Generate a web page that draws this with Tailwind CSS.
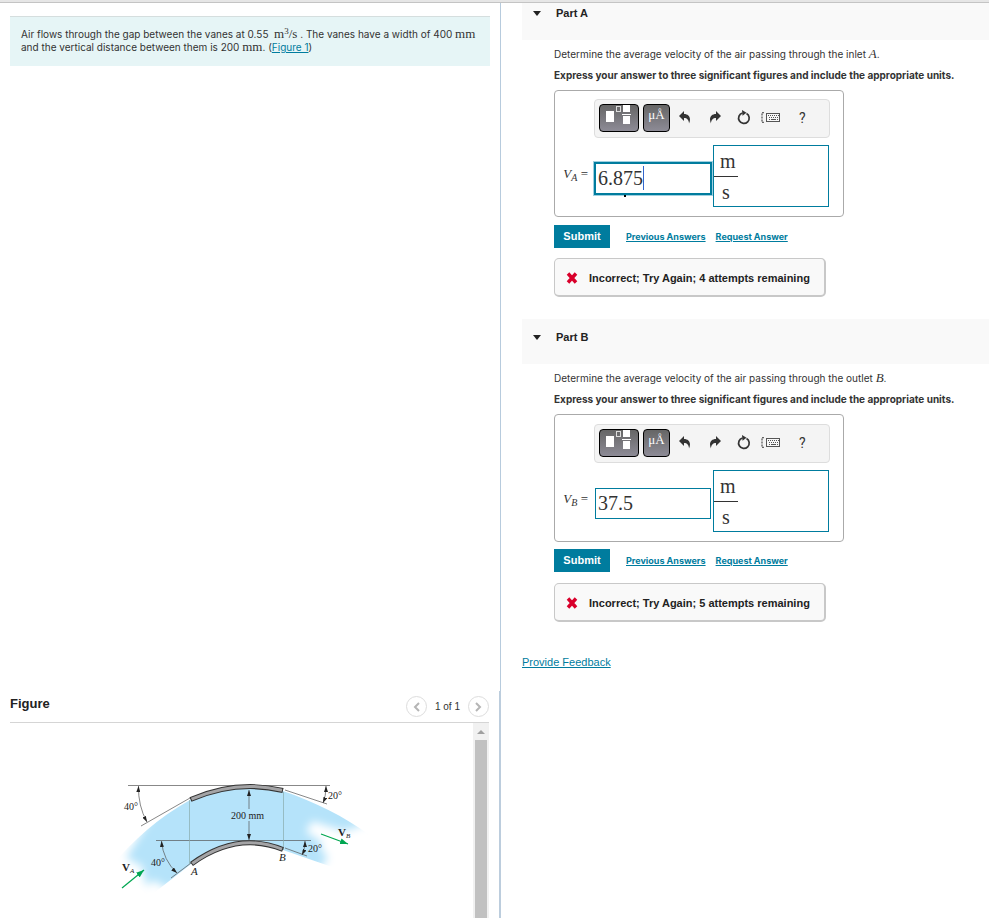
<!DOCTYPE html>
<html lang="en">
<head>
<meta charset="utf-8">
<title>Vane air flow problem</title>
<script src="https://cdn.jsdelivr.net/npm/@tailwindcss/browser@4"></script>
</head>
<body class="flex min-h-screen flex-col bg-white font-['Liberation_Sans',Arial,sans-serif] text-[10px] text-[#333]">
<svg class="hidden" aria-hidden="true">
  <symbol id="undo" viewBox="0 0 12 13"><path d="M0 5 5 0V3C10 3 12.500 7 10 12.500C10 9 8 7 5 7V10Z" fill="#333"/></symbol>
  <symbol id="reset" viewBox="0 0 14 15"><path d="M8.500 3A5.300 5.300 0 1 1 4.500 3.500" transform="matrix(-1 0 0 1 14 0)" fill="none" stroke="#333" stroke-width="1.700"/><path d="M5 0 9.500 2.800 5.500 5.800Z" fill="#333"/></symbol>
  <symbol id="keys" viewBox="0 0 20 11"><path d="M3 .5H1V10.500H3" fill="none" stroke="#666" stroke-width="1.400" stroke-dasharray="2 1"/><rect x="5.500" y="1.500" width="13" height="8" fill="#f8f8f8" stroke="#555"/><path d="M7 3.500H18M8 5.500H18M8 7.500H9M10 7.500H15M16 7.500H18" stroke="#555" stroke-dasharray="1 1"/><path d="M10 7.500H15" stroke="#555"/></symbol>
  <symbol id="templates" viewBox="0 0 26 20"><rect x="0" y="6" width="8" height="11" fill="#fff"/><rect x="10.500" y="1.500" width="4" height="5" fill="none" stroke="#ddd"/><rect x="17" y="0" width="7" height="7" fill="#fff"/><path d="M16 9.500H25" stroke="#fff"/><rect x="17" y="11" width="7" height="8" fill="#fff"/></symbol>
  <symbol id="cross" viewBox="0 0 12 12"><path d="M2 1.500 10 10.500M10 1.500 2 10.500" stroke="#d9002b" stroke-width="3.400"/></symbol>
</svg>
<header class="h-[3px] border-b border-[#c4c4c4] bg-[#e6e6e6]"></header>
<main class="grid flex-1 grid-cols-[501fr_488fr]">
  <div class="flex flex-col">
    <section class="flex-1 border-r border-[#b7cbdd] pt-[13px] pr-[10px] pl-[10px]">
      <p class="border-t border-[#d5dede] bg-[#e6f5f6] px-[11px] pt-[11px] pb-3 font-[Inter,'Liberation_Sans',sans-serif] leading-[13px]">Air flows through the gap between the vanes at 0.55 &nbsp;<span class="font-['Liberation_Serif',serif] text-[13px] leading-0">m<sup class="text-[9px]">3</sup>/s</span> . The vanes have a width of 400 <span class="font-['Liberation_Serif',serif] text-[13px] leading-0">mm</span><br>and the vertical distance between them is 200 <span class="font-['Liberation_Serif',serif] text-[13px] leading-0">mm</span>. (<a href="#figure" class="text-[#007c9e] underline">Figure 1</a>)</p>
    </section>
    <section id="figure" class="flex h-[227px] flex-col border-r-2 border-[#bccddd] pr-[10px] pl-[10px]">
      <div class="flex h-8 items-center border-b border-[#d5d5d5]">
        <h2 class="mb-[6px] text-[13px] leading-4 font-bold text-[#222]">Figure</h2>
        <div class="ml-auto flex items-center gap-2">
          <button aria-label="Previous figure" class="flex size-[21px] items-center justify-center rounded-full border border-[#ddd]"><svg class="h-[10px] w-[7px]" viewBox="0 0 7 10"><path d="M6 1 2 5 6 9" fill="none" stroke="#b5b5b5" stroke-width="2"/></svg></button>
          <span>1 of 1</span>
          <button aria-label="Next figure" class="flex size-[21px] items-center justify-center rounded-full border border-[#ddd]"><svg class="h-[10px] w-[7px]" viewBox="0 0 7 10"><path d="M1 1 5 5 1 9" fill="none" stroke="#b5b5b5" stroke-width="2"/></svg></button>
        </div>
      </div>
      <div class="flex flex-1">
        <div class="flex-1 pt-[52px] pl-[100px]">
          <svg class="h-[120px] w-[260px]" viewBox="110 775 260 120" role="img" aria-label="Air flowing between two curved vanes" font-family="Liberation Serif, serif" font-size="10" fill="#222">
            <defs>
              <filter id="soft" x="-50%" y="-50%" width="200%" height="200%"><feGaussianBlur stdDeviation="4"/></filter>
              <mask id="fade" maskUnits="userSpaceOnUse" x="90" y="760" width="300" height="150"><path filter="url(#soft)" fill="#fff" d="M180 770H310L366 824 344 831 312 821 306 832 322 842 320 848 328 858 316 872H230L166 888 154 880 146 886 142 866 126 858Z"/></mask>
              <marker id="ar" viewBox="0 0 6 4" refX="6" refY="2" markerWidth="6" markerHeight="4" markerUnits="userSpaceOnUse" orient="auto-start-reverse"><path d="M0 0 6 2 0 4Z" fill="#222"/></marker>
              <marker id="gr" viewBox="0 0 8 6" refX="8" refY="3" markerWidth="8" markerHeight="6" markerUnits="userSpaceOnUse" orient="auto"><path d="M0 0 8 3 0 6Z" fill="#00a651"/></marker>
            </defs>
            <path mask="url(#fade)" fill="#b5e3fa" d="M190 800Q237 779 283 791C315 802 345 817 368 834L335 868 283 850Q237 834 191 864L150 896 110 868C133 840 158 818 190 800Z"/>
            <g fill="none" stroke="#555" stroke-width=".7">
              <path d="M128 785.500H330M156 840.500H311M141 826 190 798M171 878 191 863M285 790 327 804M285 848 307 856"/>
              <path stroke="#8aa" d="M189.500 800V864M283.500 792V850"/>
              <path marker-start="url(#ar)" marker-end="url(#ar)" d="M138.500 786Q138 806 147 822"/>
              <path marker-start="url(#ar)" marker-end="url(#ar)" d="M161.500 841Q163 860 177 873"/>
              <path marker-start="url(#ar)" marker-end="url(#ar)" d="M326 786Q326 796 323 803"/>
              <path marker-start="url(#ar)" marker-end="url(#ar)" d="M305 841Q305 849 302 855"/>
              <path marker-start="url(#ar)" d="M249 790V809"/><path marker-end="url(#ar)" d="M249 821V840"/>
            </g>
            <g fill="none">
              <path d="M190.500 799.500Q237 779.500 283 790.500M191.500 864Q237 831 283 849.500" stroke="#333" stroke-width="5"/>
              <path d="M191.500 799.200Q237 779.500 282 790.300M192.300 863.500Q237 831 282 849.200" stroke="#a4a4a6" stroke-width="3"/>
              <path d="M122 888 144 870" stroke="#00a651" stroke-width="1.200" marker-end="url(#gr)"/>
              <path d="M321 834 348 844" stroke="#00a651" stroke-width="1.200" marker-end="url(#gr)"/>
            </g>
            <text x="124" y="810">40°</text><text x="151" y="866">40°</text>
            <text x="328" y="799">20°</text><text x="308" y="852">20°</text>
            <text x="231" y="819">200 mm</text>
            <text x="191" y="875" font-style="italic" font-size="11">A</text><text x="279" y="861" font-style="italic" font-size="11">B</text>
            <text x="122" y="871" font-weight="bold" font-size="11">V<tspan dy="2" font-size="7" font-style="italic" font-weight="normal">A</tspan></text>
            <text x="338" y="836" font-weight="bold" font-size="11">V<tspan dy="2" font-size="7" font-style="italic" font-weight="normal">B</tspan></text>
          </svg>
        </div>
        <div class="flex w-4 flex-col items-center bg-[#f1f1f1] pt-[7px]" aria-hidden="true">
          <svg class="mb-[6px] h-1 w-2" viewBox="0 0 8 4"><path d="M0 4 4 0 8 4Z" fill="#a0a0a0"/></svg>
          <div class="w-3 flex-1 bg-[#c1c1c1]"></div>
        </div>
      </div>
    </section>
  </div>

  <div class="pl-[21px]">
    <section>
      <h2 class="flex items-center bg-[#f9f9f9] pt-[2px] pb-[19px] pl-[11px] text-[11px] leading-4 font-bold text-[#222]"><svg class="mr-[15px] h-[5px] w-2" viewBox="0 0 8 5"><path d="M0 0H8L4 5Z" fill="#222"/></svg>Part A</h2>
      <div class="pt-[6px] pl-8">
        <p class="font-[Inter,'Liberation_Sans',sans-serif] leading-4">Determine the average velocity of the air passing through the inlet <i class="font-['Liberation_Serif',serif] text-[13px] leading-0">A</i>.</p>
        <p class="mt-[5px] font-[Inter,'Liberation_Sans',sans-serif] leading-4 font-bold">Express your answer to three significant figures and include the appropriate units.</p>
        <div class="mt-[7px] flex w-[290px] flex-col items-end rounded-[4px] border border-[#aaa] pt-2 pr-[13px] pb-[9px] pl-2">
          <div class="flex h-[39px] w-[236px] items-center rounded-[4px] border border-[#ddd] bg-[#f4f4f4] pb-[2px] pl-1">
            <button aria-label="Templates" class="flex h-7 w-10 justify-center rounded-[4px] border border-black bg-linear-to-b from-[#666] to-[#8d8b96]"><svg class="h-5 w-[26px]"><use href="#templates"/></svg></button>
            <button aria-label="Symbols" class="ml-1 h-7 w-[27px] rounded-[4px] border border-black bg-linear-to-b from-[#666] to-[#8d8b96] pb-[6px] font-['Liberation_Serif',serif] text-[13px] leading-[18px] text-white">μÅ</button>
            <button aria-label="Undo" class="ml-[9px]"><svg class="h-[13px] w-3"><use href="#undo"/></svg></button>
            <button aria-label="Redo" class="ml-[18px]"><svg class="h-[13px] w-3 -scale-x-100"><use href="#undo"/></svg></button>
            <button aria-label="Reset" class="ml-[16px]"><svg class="h-[15px] w-[14px]"><use href="#reset"/></svg></button>
            <button aria-label="Keyboard shortcuts" class="ml-[10px]"><svg class="h-[11px] w-5"><use href="#keys"/></svg></button>
            <button aria-label="Help" class="ml-[18px] font-[Roboto,sans-serif] text-[14px] leading-4">?</button>
          </div>
          <div class="mt-[7px] mr-px flex items-center">
            <label for="va" class="mr-[6px] mb-1 font-['Liberation_Serif',serif] text-[13px] leading-4 whitespace-nowrap"><i>V<sub class="text-[10px]">A</sub></i> =</label>
            <span class="relative mt-1 mr-px block">
              <input id="va" value="6.875" class="block h-[33px] w-[118px] border-2 border-[#007c9e] px-[2px] font-['Liberation_Serif',serif] text-[20px] outline-1 outline-[#9fd0e0]">
              <span class="absolute top-1 left-[49px] h-6 w-px bg-[#36c]"></span>
              <span class="absolute top-[33px] left-[30px] size-[2px] bg-black"></span>
            </span>
            <div role="textbox" tabindex="0" aria-label="Units for inlet velocity" class="h-[62px] w-[116px] border border-[#007c9e] font-['Liberation_Serif',serif] text-[20px]"><div class="w-6 border-b border-[#333] pl-[6px] leading-[30px]">m</div><div class="pl-2 leading-[30px]">s</div></div>
          </div>
        </div>
        <div class="mt-2 flex items-center">
          <button class="h-[23px] w-14 bg-[#007c9e] text-[11px] font-bold text-white">Submit</button>
          <a href="#" class="ml-4 font-[Inter,'Liberation_Sans',sans-serif] text-[9px] font-bold text-[#007c9e] underline">Previous Answers</a>
          <a href="#" class="ml-[10px] font-[Inter,'Liberation_Sans',sans-serif] text-[9px] font-bold text-[#007c9e] underline">Request Answer</a>
        </div>
        <div class="mt-[10px] flex h-[39px] w-[272px] items-center rounded-[5px] border border-r-2 border-b-2 border-[#c8c8c8] bg-[#f9f9f9] pt-[2px] pl-[11px] text-[11px] font-bold text-[#222]"><svg class="mr-[11px] size-3"><use href="#cross"/></svg>Incorrect; Try Again; 4 attempts remaining</div>
      </div>
    </section>

    <section class="mt-[22px]">
      <h2 class="flex items-center bg-[#f9f9f9] pt-[10px] pb-[19px] pl-[11px] text-[11px] leading-4 font-bold text-[#222]"><svg class="mr-[15px] h-[5px] w-2" viewBox="0 0 8 5"><path d="M0 0H8L4 5Z" fill="#222"/></svg>Part B</h2>
      <div class="pt-[6px] pl-8">
        <p class="font-[Inter,'Liberation_Sans',sans-serif] leading-4">Determine the average velocity of the air passing through the outlet <i class="font-['Liberation_Serif',serif] text-[13px] leading-0">B</i>.</p>
        <p class="mt-[5px] font-[Inter,'Liberation_Sans',sans-serif] leading-4 font-bold">Express your answer to three significant figures and include the appropriate units.</p>
        <div class="mt-[7px] flex w-[290px] flex-col items-end rounded-[4px] border border-[#aaa] pt-[9px] pr-[13px] pb-[9px] pl-2">
          <div class="flex h-[39px] w-[236px] items-center rounded-[4px] border border-[#ddd] bg-[#f4f4f4] pb-[2px] pl-1">
            <button aria-label="Templates" class="flex h-7 w-10 justify-center rounded-[4px] border border-black bg-linear-to-b from-[#666] to-[#8d8b96]"><svg class="h-5 w-[26px]"><use href="#templates"/></svg></button>
            <button aria-label="Symbols" class="ml-1 h-7 w-[27px] rounded-[4px] border border-black bg-linear-to-b from-[#666] to-[#8d8b96] pb-[6px] font-['Liberation_Serif',serif] text-[13px] leading-[18px] text-white">μÅ</button>
            <button aria-label="Undo" class="ml-[9px]"><svg class="h-[13px] w-3"><use href="#undo"/></svg></button>
            <button aria-label="Redo" class="ml-[18px]"><svg class="h-[13px] w-3 -scale-x-100"><use href="#undo"/></svg></button>
            <button aria-label="Reset" class="ml-[16px]"><svg class="h-[15px] w-[14px]"><use href="#reset"/></svg></button>
            <button aria-label="Keyboard shortcuts" class="ml-[10px]"><svg class="h-[11px] w-5"><use href="#keys"/></svg></button>
            <button aria-label="Help" class="ml-[18px] font-[Roboto,sans-serif] text-[14px] leading-4">?</button>
          </div>
          <div class="mt-[7px] mr-px flex items-center">
            <label for="vb" class="mr-[6px] mb-1 font-['Liberation_Serif',serif] text-[13px] leading-4 whitespace-nowrap"><i>V<sub class="text-[10px]">B</sub></i> =</label>
            <input id="vb" value="37.5" class="mt-1 mr-[2px] ml-px block h-[31px] w-[116px] border border-[#007c9e] px-[2px] font-['Liberation_Serif',serif] text-[20px]">
            <div role="textbox" tabindex="0" aria-label="Units for outlet velocity" class="h-[62px] w-[116px] border border-[#007c9e] font-['Liberation_Serif',serif] text-[20px]"><div class="w-6 border-b border-[#333] pl-[6px] leading-[30px]">m</div><div class="pl-2 leading-[30px]">s</div></div>
          </div>
        </div>
        <div class="mt-[7px] flex items-center">
          <button class="h-[23px] w-14 bg-[#007c9e] text-[11px] font-bold text-white">Submit</button>
          <a href="#" class="ml-4 font-[Inter,'Liberation_Sans',sans-serif] text-[9px] font-bold text-[#007c9e] underline">Previous Answers</a>
          <a href="#" class="ml-[10px] font-[Inter,'Liberation_Sans',sans-serif] text-[9px] font-bold text-[#007c9e] underline">Request Answer</a>
        </div>
        <div class="mt-[11px] flex h-[39px] w-[272px] items-center rounded-[5px] border border-r-2 border-b-2 border-[#c8c8c8] bg-[#f9f9f9] pt-[2px] pl-[11px] text-[11px] font-bold text-[#222]"><svg class="mr-[11px] size-3"><use href="#cross"/></svg>Incorrect; Try Again; 5 attempts remaining</div>
      </div>
    </section>
    <a href="#" class="mt-8 inline-block text-[11px] leading-4 text-[#007c9e] underline">Provide Feedback</a>
  </div>
</main>
</body>
</html>
